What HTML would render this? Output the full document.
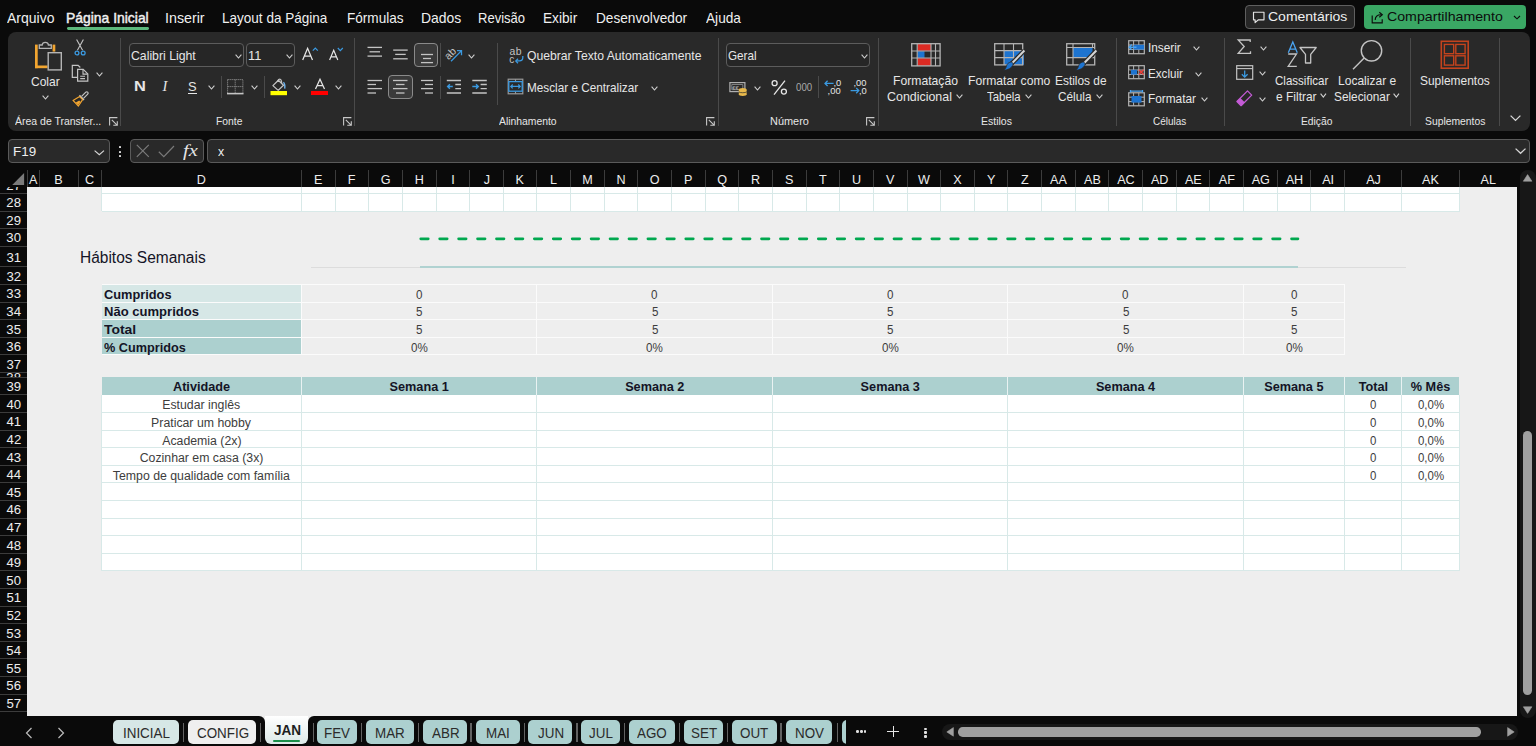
<!DOCTYPE html>
<html><head><meta charset="utf-8"><style>
html,body{margin:0;padding:0;}
body{width:1536px;height:746px;overflow:hidden;background:#0a0a0a;position:relative;font-family:"Liberation Sans", sans-serif;}
.t{position:absolute;white-space:nowrap;line-height:1;}
.b{position:absolute;}
svg.b{overflow:visible;}
</style></head><body>
<div class="t" style="left:7.10px;top:12.00px;font-size:13.9px;color:#f0f0f0;font-weight:normal;transform:scaleX(1.0072);transform-origin:0 0;">Arquivo</div>
<div class="t" style="left:66.49px;top:12.00px;font-size:13.9px;color:#f0f0f0;font-weight:normal;transform:scaleX(1.0010);transform-origin:0 0;-webkit-text-stroke:0.45px #f0f0f0;">Página Inicial</div>
<div class="t" style="left:164.92px;top:12.00px;font-size:13.9px;color:#f0f0f0;font-weight:normal;transform:scaleX(1.0266);transform-origin:0 0;">Inserir</div>
<div class="t" style="left:222.22px;top:12.00px;font-size:13.9px;color:#f0f0f0;font-weight:normal;transform:scaleX(0.9739);transform-origin:0 0;">Layout da Página</div>
<div class="t" style="left:346.61px;top:12.00px;font-size:13.9px;color:#f0f0f0;font-weight:normal;transform:scaleX(0.9776);transform-origin:0 0;">Fórmulas</div>
<div class="t" style="left:420.68px;top:12.00px;font-size:13.9px;color:#f0f0f0;font-weight:normal;transform:scaleX(1.0033);transform-origin:0 0;">Dados</div>
<div class="t" style="left:478.46px;top:12.00px;font-size:13.9px;color:#f0f0f0;font-weight:normal;transform:scaleX(0.9379);transform-origin:0 0;">Revisão</div>
<div class="t" style="left:543.31px;top:12.00px;font-size:13.9px;color:#f0f0f0;font-weight:normal;transform:scaleX(0.9842);transform-origin:0 0;">Exibir</div>
<div class="t" style="left:596.11px;top:12.00px;font-size:13.9px;color:#f0f0f0;font-weight:normal;transform:scaleX(0.9826);transform-origin:0 0;">Desenvolvedor</div>
<div class="t" style="left:706.00px;top:12.00px;font-size:13.9px;color:#f0f0f0;font-weight:normal;transform:scaleX(0.9827);transform-origin:0 0;">Ajuda</div>
<div class="b" style="left:67.30px;top:27.30px;width:81.50px;height:2.80px;background:#5cb87c;border-radius:1.4px"></div>
<div class="b" style="left:1244.80px;top:4.90px;width:110.70px;height:24.00px;background:#262626;border:1px solid #5f5f5f;box-sizing:border-box;border-radius:4px"></div>
<svg class="b" style="left:1252px;top:11px;" width="14" height="13" viewBox="0 0 14 13"><path d="M1.5 1.2h10.5v7.6h-5.6l-3.3 2.8v-2.8h-1.6z" fill="none" stroke="#e4e4e4" stroke-width="1.15" stroke-linejoin="round"/></svg>
<div class="t" style="left:1267.50px;top:10.00px;font-size:13.6px;color:#f0f0f0;font-weight:normal;transform:scaleX(1.0295);transform-origin:0 0;">Comentários</div>
<div class="b" style="left:1364.00px;top:4.90px;width:161.50px;height:24.00px;background:#3aa764;border-radius:4px"></div>
<svg class="b" style="left:1371px;top:10px;" width="13" height="14" viewBox="0 0 13 14"><path d="M1.2 5.5v7.3h10v-3.6" fill="none" stroke="#0c0c0c" stroke-width="1.15"/><path d="M4.2 10c0-3.2 2.2-5.3 6-5.3" fill="none" stroke="#0c0c0c" stroke-width="1.15"/><path d="M8.3 2.2l3 2.5-3 2.6" fill="none" stroke="#0c0c0c" stroke-width="1.15"/></svg>
<div class="t" style="left:1387.29px;top:10.00px;font-size:13.6px;color:#0c0c0c;font-weight:normal;transform:scaleX(1.0429);transform-origin:0 0;">Compartilhamento</div>
<svg class="b" style="left:1513px;top:15px;" width="8" height="5" viewBox="0 0 8 5"><path d="M1 1l3 2.8 3-2.8" fill="none" stroke="#0c0c0c" stroke-width="1.1"/></svg>
<div class="b" style="left:8.00px;top:32.00px;width:1521.50px;height:99.20px;background:#292929;border-radius:8px"></div>
<div class="b" style="left:119.70px;top:37.50px;width:1.00px;height:88.00px;background:#4a4a4a"></div>
<div class="b" style="left:353.90px;top:37.50px;width:1.00px;height:88.00px;background:#4a4a4a"></div>
<div class="b" style="left:717.60px;top:37.50px;width:1.00px;height:88.00px;background:#4a4a4a"></div>
<div class="b" style="left:877.80px;top:37.50px;width:1.00px;height:88.00px;background:#4a4a4a"></div>
<div class="b" style="left:1115.50px;top:37.50px;width:1.00px;height:88.00px;background:#4a4a4a"></div>
<div class="b" style="left:1223.50px;top:37.50px;width:1.00px;height:88.00px;background:#4a4a4a"></div>
<div class="b" style="left:1410.10px;top:37.50px;width:1.00px;height:88.00px;background:#4a4a4a"></div>
<div class="b" style="left:1499.00px;top:37.50px;width:1.00px;height:88.00px;background:#4a4a4a"></div>
<div class="b" style="left:497.00px;top:42.50px;width:1.00px;height:62.00px;background:#4a4a4a"></div>
<div class="b" style="left:221.10px;top:75.80px;width:1.00px;height:22.60px;background:#4a4a4a"></div>
<div class="b" style="left:264.00px;top:75.80px;width:1.00px;height:22.60px;background:#4a4a4a"></div>
<div class="b" style="left:439.60px;top:43.40px;width:1.00px;height:23.60px;background:#4a4a4a"></div>
<div class="b" style="left:439.60px;top:75.60px;width:1.00px;height:23.00px;background:#4a4a4a"></div>
<div class="b" style="left:818.10px;top:75.60px;width:1.00px;height:22.80px;background:#4a4a4a"></div>
<div class="t" style="left:15.00px;top:116.00px;font-size:11.2px;color:#e6e6e6;font-weight:normal;transform:scaleX(0.9373);transform-origin:0 0;">Área de Transfer...</div>
<div class="t" style="left:215.87px;top:116.00px;font-size:11.2px;color:#e6e6e6;font-weight:normal;transform:scaleX(0.9223);transform-origin:0 0;">Fonte</div>
<div class="t" style="left:498.70px;top:116.00px;font-size:11.2px;color:#e6e6e6;font-weight:normal;transform:scaleX(0.9268);transform-origin:0 0;">Alinhamento</div>
<div class="t" style="left:769.72px;top:116.00px;font-size:11.2px;color:#e6e6e6;font-weight:normal;transform:scaleX(0.9773);transform-origin:0 0;">Número</div>
<div class="t" style="left:980.76px;top:116.00px;font-size:11.2px;color:#e6e6e6;font-weight:normal;transform:scaleX(0.9402);transform-origin:0 0;">Estilos</div>
<div class="t" style="left:1153.10px;top:116.00px;font-size:11.2px;color:#e6e6e6;font-weight:normal;transform:scaleX(0.8901);transform-origin:0 0;">Células</div>
<div class="t" style="left:1300.88px;top:116.00px;font-size:11.2px;color:#e6e6e6;font-weight:normal;transform:scaleX(0.9187);transform-origin:0 0;">Edição</div>
<div class="t" style="left:1424.53px;top:116.00px;font-size:11.2px;color:#e6e6e6;font-weight:normal;transform:scaleX(0.9247);transform-origin:0 0;">Suplementos</div>
<svg class="b" style="left:108.8px;top:117.2px;" width="9" height="9" viewBox="0 0 9 9"><path d="M0.6 8.4V0.6H8.4" fill="none" stroke="#c8c8c8" stroke-width="1.1"/><path d="M2.8 2.8l5 5M8.3 4.3v4h-4" fill="none" stroke="#c8c8c8" stroke-width="1.1"/></svg>
<svg class="b" style="left:342.6px;top:117.2px;" width="9" height="9" viewBox="0 0 9 9"><path d="M0.6 8.4V0.6H8.4" fill="none" stroke="#c8c8c8" stroke-width="1.1"/><path d="M2.8 2.8l5 5M8.3 4.3v4h-4" fill="none" stroke="#c8c8c8" stroke-width="1.1"/></svg>
<svg class="b" style="left:706px;top:117.2px;" width="9" height="9" viewBox="0 0 9 9"><path d="M0.6 8.4V0.6H8.4" fill="none" stroke="#c8c8c8" stroke-width="1.1"/><path d="M2.8 2.8l5 5M8.3 4.3v4h-4" fill="none" stroke="#c8c8c8" stroke-width="1.1"/></svg>
<svg class="b" style="left:865.8px;top:117.2px;" width="9" height="9" viewBox="0 0 9 9"><path d="M0.6 8.4V0.6H8.4" fill="none" stroke="#c8c8c8" stroke-width="1.1"/><path d="M2.8 2.8l5 5M8.3 4.3v4h-4" fill="none" stroke="#c8c8c8" stroke-width="1.1"/></svg>
<svg class="b" style="left:34px;top:40px;" width="29" height="31" viewBox="0 0 29 31"><rect x="1" y="4.6" width="2.7" height="23.6" fill="#f2a530"/><rect x="1" y="25.5" width="12.6" height="2.7" fill="#f2a530"/><rect x="18.6" y="4.6" width="2.7" height="7" fill="#f2a530"/><path d="M5.3 8.4V5h2.9c0.3-3.4 5.9-3.4 6.2 0h2.9v3.4z" fill="none" stroke="#b4b4b4" stroke-width="1.3"/><rect x="14.2" y="12.7" width="13.1" height="17.2" fill="#292929" stroke="#b4b4b4" stroke-width="1.4"/></svg>
<div class="t" style="left:30.80px;top:76.00px;font-size:12.6px;color:#e6e6e6;font-weight:normal;transform:scaleX(0.9544);transform-origin:0 0;">Colar</div>
<svg class="b" style="left:41.8px;top:95.4px;" width="7" height="5" viewBox="0 0 7 5"><path d="M0.6 0.6L3.5 4L6.4 0.6" fill="none" stroke="#d0d0d0" stroke-width="1.1"/></svg>
<svg class="b" style="left:74px;top:39px;" width="12" height="17" viewBox="0 0 12 17"><path d="M2.6 0.5L8.6 11.2M9.4 0.5L3.4 11.2" stroke="#c4c4c4" stroke-width="1.1" fill="none"/><circle cx="3" cy="14" r="1.9" stroke="#3b9ae1" stroke-width="1.3" fill="none"/><circle cx="9.2" cy="14" r="1.9" stroke="#3b9ae1" stroke-width="1.3" fill="none"/></svg>
<svg class="b" style="left:71px;top:64px;" width="18" height="18" viewBox="0 0 18 18"><path d="M6.8 13.4H1.3V1.3h5.8l2.2 2.2" fill="none" stroke="#c4c4c4" stroke-width="1.2"/><path d="M6.6 5.3h5.6l4.6 4.6v7.3H6.6z" fill="none" stroke="#c4c4c4" stroke-width="1.2"/><path d="M12 5.5v4.6h4.6M9.2 12.3h4.8M9.2 14.6h4.8" fill="none" stroke="#c4c4c4" stroke-width="1.1"/></svg>
<svg class="b" style="left:96px;top:71.8px;" width="7" height="5" viewBox="0 0 7 5"><path d="M0.6 0.6L3.5 4L6.4 0.6" fill="none" stroke="#d0d0d0" stroke-width="1.1"/></svg>
<svg class="b" style="left:72px;top:90px;" width="17" height="17" viewBox="0 0 17 17"><path d="M9.6 6.4l4.2-4.2a1.3 1.3 0 0 1 1.9 1.9l-4.2 4.2" fill="none" stroke="#c4c4c4" stroke-width="1.2"/><path d="M7.4 5.4l4.6 4.6" stroke="#c4c4c4" stroke-width="1.5"/><path d="M7.6 6.6L1 10.4l5.4 5.6 4.2-6.4z" fill="none" stroke="#f2a530" stroke-width="1.2" stroke-linejoin="round"/><path d="M3.8 12.6l3.4-2.2 1.3 1.4-2.3 3.2z" fill="#f2a530"/></svg>
<div class="b" style="left:129.40px;top:43.30px;width:114.80px;height:24.00px;background:#262626;border:1px solid #5c5c5c;box-sizing:border-box;border-radius:4px"></div>
<div class="t" style="left:131.09px;top:50.00px;font-size:12.6px;color:#e6e6e6;font-weight:normal;transform:scaleX(0.9736);transform-origin:0 0;">Calibri Light</div>
<svg class="b" style="left:234.8px;top:53.8px;" width="7" height="5" viewBox="0 0 7 5"><path d="M0.6 0.6L3.5 4L6.4 0.6" fill="none" stroke="#d0d0d0" stroke-width="1.1"/></svg>
<div class="b" style="left:246.20px;top:43.30px;width:49.10px;height:24.00px;background:#262626;border:1px solid #5c5c5c;box-sizing:border-box;border-radius:4px"></div>
<div class="t" style="left:247.94px;top:50.00px;font-size:12.6px;color:#e6e6e6;font-weight:normal;transform:scaleX(1.0148);transform-origin:0 0;">11</div>
<svg class="b" style="left:286.4px;top:53.8px;" width="7" height="5" viewBox="0 0 7 5"><path d="M0.6 0.6L3.5 4L6.4 0.6" fill="none" stroke="#d0d0d0" stroke-width="1.1"/></svg>
<svg class="b" style="left:300px;top:46px;" width="16" height="16" viewBox="0 0 16 16"><path d="M2.7 14.1L7.6 2.3L12.5 14.1M4.3 10.2H10.9" fill="none" stroke="#e6e6e6" stroke-width="1.25"/></svg>
<svg class="b" style="left:312px;top:47px;" width="7" height="5" viewBox="0 0 7 5"><path d="M0.8 3.6L3.3 1L5.8 3.6" fill="none" stroke="#3b9ae1" stroke-width="1.2"/></svg>
<svg class="b" style="left:327px;top:49px;" width="13" height="13" viewBox="0 0 13 13"><path d="M2.6 11.1L6.7 1.3L10.8 11.1M3.9 7.8H9.5" fill="none" stroke="#e6e6e6" stroke-width="1.2"/></svg>
<svg class="b" style="left:337px;top:47px;" width="7" height="5" viewBox="0 0 7 5"><path d="M0.8 1L3.3 3.6L5.8 1" fill="none" stroke="#3b9ae1" stroke-width="1.2"/></svg>
<div class="t" style="left:134.23px;top:79.00px;font-size:14.6px;color:#e6e6e6;font-weight:bold;transform:scaleX(1.1261);transform-origin:0 0;">N</div>
<div class="t" style="left:162.6px;top:79.13px;font-size:14.5px;color:#e6e6e6;font-family:'Liberation Serif',serif;font-style:italic">I</div>
<div class="t" style="left:188.02px;top:81.00px;font-size:12.5px;color:#e6e6e6;font-weight:normal;transform:scaleX(1.0296);transform-origin:0 0;">S</div>
<div class="b" style="left:188.20px;top:93.00px;width:8.40px;height:1.30px;background:#e6e6e6"></div>
<svg class="b" style="left:207.5px;top:85.0px;" width="7" height="5" viewBox="0 0 7 5"><path d="M0.6 0.6L3.5 4L6.4 0.6" fill="none" stroke="#d0d0d0" stroke-width="1.1"/></svg>
<svg class="b" style="left:227px;top:79px;" width="17" height="16" viewBox="0 0 17 16"><path d="M0.6 0.6h15.3v14M0.6 0.6v14M8.2 0.6v14M0.6 7.6h15.3" fill="none" stroke="#8a8a8a" stroke-width="1" stroke-dasharray="1.2 0.8"/><path d="M0 14.6h16.5" stroke="#c4c4c4" stroke-width="1.6"/></svg>
<svg class="b" style="left:251px;top:85.0px;" width="7" height="5" viewBox="0 0 7 5"><path d="M0.6 0.6L3.5 4L6.4 0.6" fill="none" stroke="#d0d0d0" stroke-width="1.1"/></svg>
<svg class="b" style="left:271px;top:78px;" width="17" height="18" viewBox="0 0 17 18"><path d="M1.9 7.6L7.4 2.2L12.5 7.3L7.2 12.4z" fill="none" stroke="#c4c4c4" stroke-width="1.25" stroke-linejoin="round"/><path d="M6.4 3.2C8.2 0.2 10.6 0.4 10.7 5.2" fill="none" stroke="#c4c4c4" stroke-width="1.2"/><path d="M12.4 4.2c1.5 1.3 1.7 3.4 1.3 6.4" fill="none" stroke="#6fb3ee" stroke-width="1.4"/><rect x="-0.5" y="13" width="16.5" height="4.2" fill="#ffff00"/></svg>
<svg class="b" style="left:294px;top:85.0px;" width="7" height="5" viewBox="0 0 7 5"><path d="M0.6 0.6L3.5 4L6.4 0.6" fill="none" stroke="#d0d0d0" stroke-width="1.1"/></svg>
<svg class="b" style="left:313px;top:78px;" width="14" height="13" viewBox="0 0 14 13"><path d="M2.5 11L7 1.3L11.5 11M4 7.6H10" fill="none" stroke="#e6e6e6" stroke-width="1.25"/></svg>
<div class="b" style="left:311.40px;top:91.00px;width:16.40px;height:4.30px;background:#ff0000"></div>
<svg class="b" style="left:335px;top:85.0px;" width="7" height="5" viewBox="0 0 7 5"><path d="M0.6 0.6L3.5 4L6.4 0.6" fill="none" stroke="#d0d0d0" stroke-width="1.1"/></svg>
<svg class="b" style="left:367px;top:46px;" width="17" height="17" viewBox="0 0 17 17"><path d="M0.5 1.4H15" stroke="#c4c4c4" stroke-width="1.3"/><path d="M2.5 5.8H13" stroke="#c4c4c4" stroke-width="1.3"/><path d="M0.5 10.1H15" stroke="#c4c4c4" stroke-width="1.3"/></svg>
<svg class="b" style="left:393px;top:49px;" width="17" height="17" viewBox="0 0 17 17"><path d="M0.2 1.1H14.7" stroke="#c4c4c4" stroke-width="1.3"/><path d="M2.2 5.4H12.7" stroke="#c4c4c4" stroke-width="1.3"/><path d="M0.2 9.8H14.7" stroke="#c4c4c4" stroke-width="1.3"/></svg>
<div class="b" style="left:414.20px;top:43.40px;width:23.60px;height:23.70px;background:#3a3a3a;border:1px solid #8a8a8a;box-sizing:border-box;border-radius:4px"></div>
<svg class="b" style="left:421px;top:53px;" width="17" height="17" viewBox="0 0 17 17"><path d="M0 1.5H12" stroke="#c4c4c4" stroke-width="1.3"/><path d="M2 5.5H10" stroke="#c4c4c4" stroke-width="1.3"/><path d="M0 9.6H12" stroke="#c4c4c4" stroke-width="1.3"/></svg>
<svg class="b" style="left:446px;top:46px;" width="17" height="17" viewBox="0 0 17 17"><text x="0" y="0" transform="translate(2.6 14.2) rotate(-45)" font-family="Liberation Sans" font-size="10.5" fill="#c4c4c4">ab</text><path d="M5 15.2L15.3 4.9M11 4.7h4.5v4.5" fill="none" stroke="#3b9ae1" stroke-width="1.3"/></svg>
<svg class="b" style="left:468.3px;top:54.0px;" width="7" height="5" viewBox="0 0 7 5"><path d="M0.6 0.6L3.5 4L6.4 0.6" fill="none" stroke="#d0d0d0" stroke-width="1.1"/></svg>
<svg class="b" style="left:367px;top:79px;" width="17" height="17" viewBox="0 0 17 17"><path d="M0.5 1.5H15" stroke="#c4c4c4" stroke-width="1.3"/><path d="M0.5 5.5H9" stroke="#c4c4c4" stroke-width="1.3"/><path d="M0.5 9.6H15" stroke="#c4c4c4" stroke-width="1.3"/><path d="M0.5 14H9" stroke="#c4c4c4" stroke-width="1.3"/></svg>
<div class="b" style="left:388.20px;top:75.20px;width:24.40px;height:24.10px;background:#3a3a3a;border:1px solid #8a8a8a;box-sizing:border-box;border-radius:4px"></div>
<svg class="b" style="left:393px;top:79px;" width="17" height="17" viewBox="0 0 17 17"><path d="M0 1.5H14.5" stroke="#c4c4c4" stroke-width="1.3"/><path d="M3 5.5H11.5" stroke="#c4c4c4" stroke-width="1.3"/><path d="M0 9.6H14.5" stroke="#c4c4c4" stroke-width="1.3"/><path d="M3 14H11.5" stroke="#c4c4c4" stroke-width="1.3"/></svg>
<svg class="b" style="left:421px;top:79px;" width="17" height="17" viewBox="0 0 17 17"><path d="M0 1.5H12" stroke="#c4c4c4" stroke-width="1.3"/><path d="M4 5.5H12" stroke="#c4c4c4" stroke-width="1.3"/><path d="M0 9.6H12" stroke="#c4c4c4" stroke-width="1.3"/><path d="M4 14H12" stroke="#c4c4c4" stroke-width="1.3"/></svg>
<svg class="b" style="left:446px;top:79px;" width="17" height="17" viewBox="0 0 17 17"><path d="M0.8 1.5H15M9.3 5.5H15M9.3 9.6H15M0.8 14H15" stroke="#c4c4c4" stroke-width="1.3"/><path d="M6.8 7.5H1.6M3.9 5.2L1.6 7.5l2.3 2.3" fill="none" stroke="#3b9ae1" stroke-width="1.4"/></svg>
<svg class="b" style="left:472px;top:79px;" width="17" height="17" viewBox="0 0 17 17"><path d="M0.3 1.5H14.8M8.6 5.5H14.8M8.6 9.6H14.8M0.3 14H14.8" stroke="#c4c4c4" stroke-width="1.3"/><path d="M0.3 7.5H6.3M4 5.2L6.3 7.5 4 9.8" fill="none" stroke="#3b9ae1" stroke-width="1.4"/></svg>
<svg class="b" style="left:509px;top:47px;" width="16" height="17" viewBox="0 0 16 17"><text x="0.6" y="7.6" font-family="Liberation Sans" font-size="10.4" fill="#c4c4c4" letter-spacing="0.3">ab</text><text x="0.2" y="15.8" font-family="Liberation Sans" font-size="10" fill="#c4c4c4">c</text><path d="M13.8 9v1.6c0 2-1.2 3.3-3.3 3.3H7" fill="none" stroke="#3b9ae1" stroke-width="1.3"/><path d="M9 11.8L6.8 14 9 16.2" fill="none" stroke="#3b9ae1" stroke-width="1.3"/></svg>
<div class="t" style="left:527.45px;top:50.00px;font-size:12.6px;color:#e6e6e6;font-weight:normal;transform:scaleX(0.9671);transform-origin:0 0;">Quebrar Texto Automaticamente</div>
<svg class="b" style="left:507px;top:78px;" width="17" height="17" viewBox="0 0 17 17"><rect x="1.2" y="1.2" width="14.6" height="14.6" fill="none" stroke="#9a9a9a" stroke-width="1.2"/><path d="M8.5 1.2v2.2M8.5 13.6v2.2" stroke="#9a9a9a" stroke-width="1.1"/><rect x="1.8" y="3.6" width="13.4" height="9.6" fill="none" stroke="#3b9ae1" stroke-width="1.3"/><path d="M4 8.4h9M5.7 6.5L3.8 8.4l1.9 1.9M11.3 6.5l1.9 1.9-1.9 1.9" fill="none" stroke="#3b9ae1" stroke-width="1.2"/></svg>
<div class="t" style="left:527.06px;top:82.00px;font-size:12.6px;color:#e6e6e6;font-weight:normal;transform:scaleX(0.9337);transform-origin:0 0;">Mesclar e Centralizar</div>
<svg class="b" style="left:650.7px;top:85.5px;" width="7" height="5" viewBox="0 0 7 5"><path d="M0.6 0.6L3.5 4L6.4 0.6" fill="none" stroke="#d0d0d0" stroke-width="1.1"/></svg>
<div class="b" style="left:726.40px;top:43.40px;width:144.10px;height:23.70px;background:#262626;border:1px solid #5c5c5c;box-sizing:border-box;border-radius:4px"></div>
<div class="t" style="left:728.41px;top:50.00px;font-size:12.6px;color:#e6e6e6;font-weight:normal;transform:scaleX(0.9299);transform-origin:0 0;">Geral</div>
<svg class="b" style="left:861.0px;top:54.0px;" width="7" height="5" viewBox="0 0 7 5"><path d="M0.6 0.6L3.5 4L6.4 0.6" fill="none" stroke="#d0d0d0" stroke-width="1.1"/></svg>
<svg class="b" style="left:729px;top:81px;" width="19" height="15" viewBox="0 0 19 15"><rect x="0.9" y="1.6" width="15" height="9" fill="none" stroke="#b0b0b0" stroke-width="1.2"/><path d="M2.8 3.5h11v5.2h-11z" fill="none" stroke="#8a8a8a" stroke-width="0.9"/><text x="3.2" y="8.6" font-family="Liberation Sans" font-size="6" fill="#b0b0b0">€€</text><ellipse cx="13.7" cy="8.7" rx="3.9" ry="1.6" fill="#e7b84c"/><rect x="9.8" y="8.7" width="7.8" height="5" fill="#e7b84c"/><ellipse cx="13.7" cy="13.5" rx="3.9" ry="1.4" fill="#e7b84c"/><path d="M9.8 10.9c1 1.1 6.8 1.1 7.8 0" fill="none" stroke="#292929" stroke-width="0.7"/></svg>
<svg class="b" style="left:754px;top:85.8px;" width="7" height="5" viewBox="0 0 7 5"><path d="M0.6 0.6L3.5 4L6.4 0.6" fill="none" stroke="#d0d0d0" stroke-width="1.1"/></svg>
<svg class="b" style="left:771px;top:79px;" width="17" height="17" viewBox="0 0 17 17"><circle cx="3.6" cy="4.2" r="2.5" fill="none" stroke="#e6e6e6" stroke-width="1.3"/><circle cx="12.9" cy="12.6" r="2.5" fill="none" stroke="#e6e6e6" stroke-width="1.3"/><path d="M14 1.6L3 15.6" stroke="#e6e6e6" stroke-width="1.3"/></svg>
<div class="t" style="left:796.41px;top:82.00px;font-size:10.5px;color:#a8a8a8;font-weight:normal;transform:scaleX(0.9224);transform-origin:0 0;">000</div>
<svg class="b" style="left:824px;top:79px;" width="18" height="17" viewBox="0 0 18 17"><text x="9.4" y="7.2" font-family="Liberation Sans" font-size="9.4" fill="#e6e6e6">,0</text><text x="3.6" y="15.2" font-family="Liberation Sans" font-size="9.4" fill="#e6e6e6">,00</text><path d="M1 4.4h8.6M3.6 1.8L1 4.4l2.6 2.6" fill="none" stroke="#3b9ae1" stroke-width="1.3"/></svg>
<svg class="b" style="left:850px;top:79px;" width="18" height="17" viewBox="0 0 18 17"><text x="3.4" y="7.2" font-family="Liberation Sans" font-size="9.4" fill="#e6e6e6">,00</text><text x="9.0" y="15.4" font-family="Liberation Sans" font-size="9.4" fill="#e6e6e6">,0</text><path d="M0.6 11.6h8.2M6.2 9l2.6 2.6-2.6 2.6" fill="none" stroke="#3b9ae1" stroke-width="1.3"/></svg>
<svg class="b" style="left:911px;top:43px;" width="30" height="24" viewBox="0 0 30 24"><rect x="6.5" y="0.8" width="13.5" height="7" fill="#dc2a23"/><rect x="6.5" y="15.2" width="13.5" height="7.6" fill="#dc2a23"/><rect x="6.5" y="8.2" width="7" height="6.6" fill="#1e74d0"/><rect x="0.7" y="0.7" width="28.4" height="22.2" fill="none" stroke="#b4b4b4" stroke-width="1.3"/><path d="M6.2 0.7v22.2M20 0.7v22.2M24.5 0.7v22.2M0.7 8h28.4M0.7 15h28.4" stroke="#b4b4b4" stroke-width="1.1"/></svg>
<div class="t" style="left:892.73px;top:75.00px;font-size:12.6px;color:#e6e6e6;font-weight:normal;transform:scaleX(0.9664);transform-origin:0 0;">Formatação</div>
<div class="t" style="left:887.38px;top:91.00px;font-size:12.6px;color:#e6e6e6;font-weight:normal;transform:scaleX(0.9862);transform-origin:0 0;">Condicional</div>
<svg class="b" style="left:955.6px;top:93.8px;" width="7" height="5" viewBox="0 0 7 5"><path d="M0.6 0.6L3.5 4L6.4 0.6" fill="none" stroke="#d0d0d0" stroke-width="1.1"/></svg>
<svg class="b" style="left:994px;top:43px;" width="33" height="29" viewBox="0 0 33 29"><rect x="10" y="7.8" width="20" height="14" fill="#1e74d0"/><rect x="0.7" y="0.7" width="28" height="21.2" fill="none" stroke="#b4b4b4" stroke-width="1.3"/><path d="M10 0.7v21.2M19.5 0.7v21.2M0.7 7.6h28M0.7 14.6h28" stroke="#b4b4b4" stroke-width="1.1"/><path d="M30.4 7.5L17.5 20.8" stroke="#2a2a2a" stroke-width="4.5"/><path d="M30.4 7.5L17.5 20.8" stroke="#d6d6d6" stroke-width="2"/><path d="M15.5 19.5c2-1.5 4.5 0.5 3.2 3-1.2 2.6-4.5 4.5-9.2 4.8 2.4-1.6 2.8-3.4 3.2-4.8 0.4-1.5 1.4-2.4 2.8-3z" fill="#1e74d0" stroke="#2a2a2a" stroke-width="0.8"/></svg>
<div class="t" style="left:967.63px;top:75.00px;font-size:12.6px;color:#e6e6e6;font-weight:normal;transform:scaleX(0.9641);transform-origin:0 0;">Formatar como</div>
<div class="t" style="left:987.07px;top:91.00px;font-size:12.6px;color:#e6e6e6;font-weight:normal;transform:scaleX(0.9063);transform-origin:0 0;">Tabela</div>
<svg class="b" style="left:1024.7px;top:93.8px;" width="7" height="5" viewBox="0 0 7 5"><path d="M0.6 0.6L3.5 4L6.4 0.6" fill="none" stroke="#d0d0d0" stroke-width="1.1"/></svg>
<svg class="b" style="left:1066px;top:43px;" width="33" height="29" viewBox="0 0 33 29"><rect x="7" y="4.5" width="19.5" height="10" fill="#1e74d0"/><rect x="0.7" y="0.7" width="28" height="21.2" fill="none" stroke="#b4b4b4" stroke-width="1.3"/><path d="M7 0.7v21.2M0.7 4.5h28M0.7 14.6h28M26.5 0.7v4" stroke="#b4b4b4" stroke-width="1.1"/><path d="M30.4 7.5L17.5 20.8" stroke="#2a2a2a" stroke-width="4.5"/><path d="M30.4 7.5L17.5 20.8" stroke="#d6d6d6" stroke-width="2"/><path d="M15.5 19.5c2-1.5 4.5 0.5 3.2 3-1.2 2.6-4.5 4.5-9.2 4.8 2.4-1.6 2.8-3.4 3.2-4.8 0.4-1.5 1.4-2.4 2.8-3z" fill="#1e74d0" stroke="#2a2a2a" stroke-width="0.8"/></svg>
<div class="t" style="left:1054.75px;top:75.00px;font-size:12.6px;color:#e6e6e6;font-weight:normal;transform:scaleX(0.9445);transform-origin:0 0;">Estilos de</div>
<div class="t" style="left:1058.01px;top:91.00px;font-size:12.6px;color:#e6e6e6;font-weight:normal;transform:scaleX(0.9376);transform-origin:0 0;">Célula</div>
<svg class="b" style="left:1095.5px;top:93.8px;" width="7" height="5" viewBox="0 0 7 5"><path d="M0.6 0.6L3.5 4L6.4 0.6" fill="none" stroke="#d0d0d0" stroke-width="1.1"/></svg>
<svg class="b" style="left:1128px;top:40px;" width="17" height="15" viewBox="0 0 17 15"><rect x="0.7" y="0.7" width="15.6" height="13" fill="none" stroke="#b4b4b4" stroke-width="1.2"/><path d="M5.6 0.7v13M10.8 0.7v13M0.7 5h15.6M0.7 9.4h15.6" stroke="#b4b4b4" stroke-width="1"/><rect x="5.6" y="4.8" width="10.5" height="4.8" fill="#1e74d0"/><path d="M8.5 7.2H1.2M3.8 4.6L1.2 7.2l2.6 2.6" fill="none" stroke="#4aa3f0" stroke-width="1.4"/></svg>
<div class="t" style="left:1147.84px;top:42.00px;font-size:12.6px;color:#e6e6e6;font-weight:normal;transform:scaleX(0.9363);transform-origin:0 0;">Inserir</div>
<svg class="b" style="left:1192.8px;top:45.8px;" width="7" height="5" viewBox="0 0 7 5"><path d="M0.6 0.6L3.5 4L6.4 0.6" fill="none" stroke="#d0d0d0" stroke-width="1.1"/></svg>
<svg class="b" style="left:1128px;top:65px;" width="17" height="15" viewBox="0 0 17 15"><rect x="0.7" y="0.7" width="15.6" height="13" fill="none" stroke="#b4b4b4" stroke-width="1.2"/><path d="M5.6 0.7v13M10.8 0.7v13M0.7 5h15.6M0.7 9.4h15.6" stroke="#b4b4b4" stroke-width="1"/><rect x="3" y="4.8" width="6" height="4.8" fill="#1e74d0"/><path d="M11 4.8l4.6 4.8M15.6 4.8L11 9.6" stroke="#e8413c" stroke-width="1.4"/><rect x="1" y="5.5" width="1.5" height="3.4" fill="#292929"/></svg>
<div class="t" style="left:1147.97px;top:68.00px;font-size:12.6px;color:#e6e6e6;font-weight:normal;transform:scaleX(0.9262);transform-origin:0 0;">Excluir</div>
<svg class="b" style="left:1195.0px;top:71.5px;" width="7" height="5" viewBox="0 0 7 5"><path d="M0.6 0.6L3.5 4L6.4 0.6" fill="none" stroke="#d0d0d0" stroke-width="1.1"/></svg>
<svg class="b" style="left:1128px;top:90px;" width="17" height="17" viewBox="0 0 17 17"><rect x="0.7" y="2.8" width="15.6" height="13" fill="none" stroke="#b4b4b4" stroke-width="1.2"/><path d="M5.6 2.8v13M10.8 2.8v13M0.7 7.2h15.6M0.7 11.6h15.6" stroke="#b4b4b4" stroke-width="1"/><rect x="3.5" y="6" width="10" height="6.6" fill="#1e74d0"/><path d="M2.5 1.2h12M2.5 0v2.5M14.5 0v2.5" stroke="#4aa3f0" stroke-width="1.3"/></svg>
<div class="t" style="left:1147.95px;top:93.00px;font-size:12.6px;color:#e6e6e6;font-weight:normal;transform:scaleX(0.9400);transform-origin:0 0;">Formatar</div>
<svg class="b" style="left:1200.5px;top:96.8px;" width="7" height="5" viewBox="0 0 7 5"><path d="M0.6 0.6L3.5 4L6.4 0.6" fill="none" stroke="#d0d0d0" stroke-width="1.1"/></svg>
<svg class="b" style="left:1237px;top:39px;" width="15" height="16" viewBox="0 0 15 16"><path d="M13.2 3V1H1.2l6 6.5-6 6.8h12.3v-2" fill="none" stroke="#c4c4c4" stroke-width="1.3" stroke-linejoin="miter"/></svg>
<svg class="b" style="left:1260px;top:45.5px;" width="7" height="5" viewBox="0 0 7 5"><path d="M0.6 0.6L3.5 4L6.4 0.6" fill="none" stroke="#d0d0d0" stroke-width="1.1"/></svg>
<svg class="b" style="left:1236px;top:65px;" width="18" height="16" viewBox="0 0 18 16"><rect x="0.7" y="0.7" width="16" height="13.6" fill="none" stroke="#c4c4c4" stroke-width="1.2"/><path d="M0.7 3.6h16" stroke="#c4c4c4" stroke-width="1.1"/><path d="M8.7 5.5v6.5M5.8 9.3l2.9 2.9 2.9-2.9" fill="none" stroke="#3b9ae1" stroke-width="1.3"/></svg>
<svg class="b" style="left:1258.6px;top:71.0px;" width="7" height="5" viewBox="0 0 7 5"><path d="M0.6 0.6L3.5 4L6.4 0.6" fill="none" stroke="#d0d0d0" stroke-width="1.1"/></svg>
<svg class="b" style="left:1236px;top:90px;" width="17" height="17" viewBox="0 0 17 17"><path d="M15.7 5.1L11.5 0.9 0.9 11.5 5.1 15.7z" fill="none" stroke="#c45bd6" stroke-width="1.25" stroke-linejoin="round"/><path d="M0.9 11.5L4.4 8 8.6 12.2 5.1 15.7z" fill="#c45bd6"/></svg>
<svg class="b" style="left:1258.6px;top:97.0px;" width="7" height="5" viewBox="0 0 7 5"><path d="M0.6 0.6L3.5 4L6.4 0.6" fill="none" stroke="#d0d0d0" stroke-width="1.1"/></svg>
<svg class="b" style="left:1286px;top:41px;" width="13" height="13" viewBox="0 0 13 13"><path d="M2.3 11.7L6.8 1L11.3 11.7M3.8 8.1H9.8" fill="none" stroke="#4aa3f0" stroke-width="1.3"/></svg>
<svg class="b" style="left:1287px;top:53px;" width="11" height="15" viewBox="0 0 11 15"><path d="M1.2 1h8.3L1.2 13.4h8.6" fill="none" stroke="#c4c4c4" stroke-width="1.3"/></svg>
<svg class="b" style="left:1299px;top:46px;" width="19" height="19" viewBox="0 0 19 19"><path d="M1 1.5h16.2l-5.5 6.8v8.7h-5.2V8.3z" fill="none" stroke="#c4c4c4" stroke-width="1.3" stroke-linejoin="round"/></svg>
<div class="t" style="left:1275.22px;top:75.00px;font-size:12.6px;color:#e6e6e6;font-weight:normal;transform:scaleX(0.9168);transform-origin:0 0;">Classificar</div>
<div class="t" style="left:1276.22px;top:91.00px;font-size:12.6px;color:#e6e6e6;font-weight:normal;transform:scaleX(0.9510);transform-origin:0 0;">e Filtrar</div>
<svg class="b" style="left:1320.4px;top:93.4px;" width="6.6" height="5" viewBox="0 0 6.6 5"><path d="M0.6 0.6L3.3 4L6.0 0.6" fill="none" stroke="#d0d0d0" stroke-width="1.1"/></svg>
<svg class="b" style="left:1352px;top:39px;" width="32" height="32" viewBox="0 0 32 32"><circle cx="19.5" cy="11.8" r="10.2" fill="none" stroke="#c4c4c4" stroke-width="1.4"/><path d="M12.2 19L1 30.3" stroke="#c4c4c4" stroke-width="1.4"/></svg>
<div class="t" style="left:1338.04px;top:75.00px;font-size:12.6px;color:#e6e6e6;font-weight:normal;transform:scaleX(0.9554);transform-origin:0 0;">Localizar e</div>
<div class="t" style="left:1334.07px;top:91.00px;font-size:12.6px;color:#e6e6e6;font-weight:normal;transform:scaleX(0.9384);transform-origin:0 0;">Selecionar</div>
<svg class="b" style="left:1393.4px;top:93.4px;" width="6.6" height="5" viewBox="0 0 6.6 5"><path d="M0.6 0.6L3.3 4L6.0 0.6" fill="none" stroke="#d0d0d0" stroke-width="1.1"/></svg>
<svg class="b" style="left:1440px;top:40px;" width="30" height="30" viewBox="0 0 30 30"><rect x="1.3" y="1.3" width="26.9" height="26.9" fill="none" stroke="#c4431d" stroke-width="1.6"/><rect x="4.4" y="4.4" width="9.3" height="9.3" fill="none" stroke="#c4431d" stroke-width="1.4"/><rect x="15.8" y="4.4" width="9.3" height="9.3" fill="none" stroke="#c4431d" stroke-width="1.4"/><rect x="4.4" y="15.8" width="9.3" height="9.3" fill="none" stroke="#c4431d" stroke-width="1.4"/><rect x="15.8" y="15.8" width="9.3" height="9.3" fill="none" stroke="#c4431d" stroke-width="1.4"/></svg>
<div class="t" style="left:1420.26px;top:75.00px;font-size:12.6px;color:#e6e6e6;font-weight:normal;transform:scaleX(0.9488);transform-origin:0 0;">Suplementos</div>
<svg class="b" style="left:1509.8px;top:115.0px;" width="11" height="6.4" viewBox="0 0 11 6.4"><path d="M0.6 0.6L5.5 5.4L10.4 0.6" fill="none" stroke="#d8d8d8" stroke-width="1.3"/></svg>
<div class="b" style="left:8.30px;top:139.40px;width:101.70px;height:23.80px;background:#292929;border:1px solid #5a5a5a;box-sizing:border-box;border-radius:4px"></div>
<div class="t" style="left:13.03px;top:145.00px;font-size:13.4px;color:#f0f0f0;font-weight:normal;transform:scaleX(1.0013);transform-origin:0 0;">F19</div>
<svg class="b" style="left:93.9px;top:150.3px;" width="10.6" height="5.7" viewBox="0 0 10.6 5.7"><path d="M0.6 0.6L5.3 4.7L10.0 0.6" fill="none" stroke="#d6d6d6" stroke-width="1.2"/></svg>
<div class="b" style="left:118.50px;top:146.40px;width:2.00px;height:2.00px;background:#d8d8d8;border-radius:0.6px"></div>
<div class="b" style="left:118.50px;top:150.70px;width:2.00px;height:2.00px;background:#d8d8d8;border-radius:0.6px"></div>
<div class="b" style="left:118.50px;top:155.00px;width:2.00px;height:2.00px;background:#d8d8d8;border-radius:0.6px"></div>
<div class="b" style="left:130.00px;top:139.30px;width:73.50px;height:24.00px;background:#292929;border:1px solid #5a5a5a;box-sizing:border-box;border-radius:4px"></div>
<svg class="b" style="left:136px;top:144px;" width="14" height="14" viewBox="0 0 14 14"><path d="M0.8 0.8L12.8 12.8M12.8 0.8L0.8 12.8" stroke="#7a7a7a" stroke-width="1.2"/></svg>
<svg class="b" style="left:158px;top:145px;" width="17" height="13" viewBox="0 0 17 13"><path d="M0.8 6.8L5.8 11.6L16 1" fill="none" stroke="#7a7a7a" stroke-width="1.2"/></svg>
<div class="t" style="left:183.10px;top:142.00px;font-size:17.5px;color:#e6e6e6;font-family:'Liberation Serif',serif;font-style:italic;transform:scaleX(1.1672);transform-origin:0 0;">fx</div>
<div class="b" style="left:207.40px;top:139.30px;width:1322.30px;height:23.80px;background:#292929;border:1px solid #5a5a5a;box-sizing:border-box;border-radius:4px"></div>
<div class="t" style="left:217.68px;top:146.00px;font-size:12.6px;color:#f0f0f0;font-weight:normal;transform:scaleX(0.9755);transform-origin:0 0;">x</div>
<svg class="b" style="left:1515.2px;top:147.7px;" width="11.1" height="6.3" viewBox="0 0 11.1 6.3"><path d="M0.6 0.6L5.55 5.3L10.5 0.6" fill="none" stroke="#d6d6d6" stroke-width="1.3"/></svg>
<div class="b" style="left:26.80px;top:187.30px;width:1490.20px;height:528.90px;background:#eeeeee"></div>
<svg class="b" style="left:11px;top:172px;" width="15" height="15" viewBox="0 0 15 15"><path d="M13.1 1.1V13H1.2z" fill="#7b7b7b"/></svg>
<div class="b" style="left:26.50px;top:170.00px;width:1.00px;height:17.30px;background:#3c3c3c"></div>
<div class="t" style="left:29.06px;top:174.00px;font-size:12.6px;color:#ededed;font-weight:normal;transform:scaleX(1.0000);transform-origin:0 0;">A</div>
<div class="b" style="left:39.00px;top:170.00px;width:1.00px;height:17.30px;background:#3c3c3c"></div>
<div class="t" style="left:54.37px;top:174.00px;font-size:12.6px;color:#ededed;font-weight:normal;transform:scaleX(1.0000);transform-origin:0 0;">B</div>
<div class="b" style="left:77.50px;top:170.00px;width:1.00px;height:17.30px;background:#3c3c3c"></div>
<div class="t" style="left:85.12px;top:174.00px;font-size:12.6px;color:#ededed;font-weight:normal;transform:scaleX(1.0000);transform-origin:0 0;">C</div>
<div class="b" style="left:101.00px;top:170.00px;width:1.00px;height:17.30px;background:#3c3c3c"></div>
<div class="t" style="left:196.74px;top:174.00px;font-size:12.6px;color:#ededed;font-weight:normal;transform:scaleX(1.0000);transform-origin:0 0;">D</div>
<div class="b" style="left:301.00px;top:170.00px;width:1.00px;height:17.30px;background:#3c3c3c"></div>
<div class="t" style="left:313.88px;top:174.00px;font-size:12.6px;color:#ededed;font-weight:normal;transform:scaleX(1.0000);transform-origin:0 0;">E</div>
<div class="b" style="left:334.64px;top:170.00px;width:1.00px;height:17.30px;background:#3c3c3c"></div>
<div class="t" style="left:347.87px;top:174.00px;font-size:12.6px;color:#ededed;font-weight:normal;transform:scaleX(1.0000);transform-origin:0 0;">F</div>
<div class="b" style="left:368.28px;top:170.00px;width:1.00px;height:17.30px;background:#3c3c3c"></div>
<div class="t" style="left:380.85px;top:174.00px;font-size:12.6px;color:#ededed;font-weight:normal;transform:scaleX(1.0000);transform-origin:0 0;">G</div>
<div class="b" style="left:401.93px;top:170.00px;width:1.00px;height:17.30px;background:#3c3c3c"></div>
<div class="t" style="left:414.71px;top:174.00px;font-size:12.6px;color:#ededed;font-weight:normal;transform:scaleX(1.0000);transform-origin:0 0;">H</div>
<div class="b" style="left:435.57px;top:170.00px;width:1.00px;height:17.30px;background:#3c3c3c"></div>
<div class="t" style="left:451.16px;top:174.00px;font-size:12.6px;color:#ededed;font-weight:normal;transform:scaleX(1.0000);transform-origin:0 0;">I</div>
<div class="b" style="left:469.21px;top:170.00px;width:1.00px;height:17.30px;background:#3c3c3c"></div>
<div class="t" style="left:483.76px;top:174.00px;font-size:12.6px;color:#ededed;font-weight:normal;transform:scaleX(1.0000);transform-origin:0 0;">J</div>
<div class="b" style="left:502.85px;top:170.00px;width:1.00px;height:17.30px;background:#3c3c3c"></div>
<div class="t" style="left:515.54px;top:174.00px;font-size:12.6px;color:#ededed;font-weight:normal;transform:scaleX(1.0000);transform-origin:0 0;">K</div>
<div class="b" style="left:536.49px;top:170.00px;width:1.00px;height:17.30px;background:#3c3c3c"></div>
<div class="t" style="left:550.00px;top:174.00px;font-size:12.6px;color:#ededed;font-weight:normal;transform:scaleX(1.0000);transform-origin:0 0;">L</div>
<div class="b" style="left:570.14px;top:170.00px;width:1.00px;height:17.30px;background:#3c3c3c"></div>
<div class="t" style="left:582.23px;top:174.00px;font-size:12.6px;color:#ededed;font-weight:normal;transform:scaleX(1.0000);transform-origin:0 0;">M</div>
<div class="b" style="left:603.78px;top:170.00px;width:1.00px;height:17.30px;background:#3c3c3c"></div>
<div class="t" style="left:616.56px;top:174.00px;font-size:12.6px;color:#ededed;font-weight:normal;transform:scaleX(1.0000);transform-origin:0 0;">N</div>
<div class="b" style="left:637.42px;top:170.00px;width:1.00px;height:17.30px;background:#3c3c3c"></div>
<div class="t" style="left:649.86px;top:174.00px;font-size:12.6px;color:#ededed;font-weight:normal;transform:scaleX(1.0000);transform-origin:0 0;">O</div>
<div class="b" style="left:671.06px;top:170.00px;width:1.00px;height:17.30px;background:#3c3c3c"></div>
<div class="t" style="left:684.00px;top:174.00px;font-size:12.6px;color:#ededed;font-weight:normal;transform:scaleX(1.0000);transform-origin:0 0;">P</div>
<div class="b" style="left:704.70px;top:170.00px;width:1.00px;height:17.30px;background:#3c3c3c"></div>
<div class="t" style="left:717.14px;top:174.00px;font-size:12.6px;color:#ededed;font-weight:normal;transform:scaleX(1.0000);transform-origin:0 0;">Q</div>
<div class="b" style="left:738.35px;top:170.00px;width:1.00px;height:17.30px;background:#3c3c3c"></div>
<div class="t" style="left:750.91px;top:174.00px;font-size:12.6px;color:#ededed;font-weight:normal;transform:scaleX(1.0000);transform-origin:0 0;">R</div>
<div class="b" style="left:771.99px;top:170.00px;width:1.00px;height:17.30px;background:#3c3c3c"></div>
<div class="t" style="left:785.12px;top:174.00px;font-size:12.6px;color:#ededed;font-weight:normal;transform:scaleX(1.0000);transform-origin:0 0;">S</div>
<div class="b" style="left:805.63px;top:170.00px;width:1.00px;height:17.30px;background:#3c3c3c"></div>
<div class="t" style="left:819.11px;top:174.00px;font-size:12.6px;color:#ededed;font-weight:normal;transform:scaleX(1.0000);transform-origin:0 0;">T</div>
<div class="b" style="left:839.27px;top:170.00px;width:1.00px;height:17.30px;background:#3c3c3c"></div>
<div class="t" style="left:852.06px;top:174.00px;font-size:12.6px;color:#ededed;font-weight:normal;transform:scaleX(1.0000);transform-origin:0 0;">U</div>
<div class="b" style="left:872.91px;top:170.00px;width:1.00px;height:17.30px;background:#3c3c3c"></div>
<div class="t" style="left:886.05px;top:174.00px;font-size:12.6px;color:#ededed;font-weight:normal;transform:scaleX(1.0000);transform-origin:0 0;">V</div>
<div class="b" style="left:906.56px;top:170.00px;width:1.00px;height:17.30px;background:#3c3c3c"></div>
<div class="t" style="left:917.92px;top:174.00px;font-size:12.6px;color:#ededed;font-weight:normal;transform:scaleX(1.0000);transform-origin:0 0;">W</div>
<div class="b" style="left:940.20px;top:170.00px;width:1.00px;height:17.30px;background:#3c3c3c"></div>
<div class="t" style="left:953.30px;top:174.00px;font-size:12.6px;color:#ededed;font-weight:normal;transform:scaleX(1.0000);transform-origin:0 0;">X</div>
<div class="b" style="left:973.84px;top:170.00px;width:1.00px;height:17.30px;background:#3c3c3c"></div>
<div class="t" style="left:986.94px;top:174.00px;font-size:12.6px;color:#ededed;font-weight:normal;transform:scaleX(1.0000);transform-origin:0 0;">Y</div>
<div class="b" style="left:1007.48px;top:170.00px;width:1.00px;height:17.30px;background:#3c3c3c"></div>
<div class="t" style="left:1020.96px;top:174.00px;font-size:12.6px;color:#ededed;font-weight:normal;transform:scaleX(1.0000);transform-origin:0 0;">Z</div>
<div class="b" style="left:1041.12px;top:170.00px;width:1.00px;height:17.30px;background:#3c3c3c"></div>
<div class="t" style="left:1050.07px;top:174.00px;font-size:12.6px;color:#ededed;font-weight:normal;transform:scaleX(1.0000);transform-origin:0 0;">AA</div>
<div class="b" style="left:1074.77px;top:170.00px;width:1.00px;height:17.30px;background:#3c3c3c"></div>
<div class="t" style="left:1084.02px;top:174.00px;font-size:12.6px;color:#ededed;font-weight:normal;transform:scaleX(1.0000);transform-origin:0 0;">AB</div>
<div class="b" style="left:1108.41px;top:170.00px;width:1.00px;height:17.30px;background:#3c3c3c"></div>
<div class="t" style="left:1117.22px;top:174.00px;font-size:12.6px;color:#ededed;font-weight:normal;transform:scaleX(1.0000);transform-origin:0 0;">AC</div>
<div class="b" style="left:1142.05px;top:170.00px;width:1.00px;height:17.30px;background:#3c3c3c"></div>
<div class="t" style="left:1150.93px;top:174.00px;font-size:12.6px;color:#ededed;font-weight:normal;transform:scaleX(1.0000);transform-origin:0 0;">AD</div>
<div class="b" style="left:1175.69px;top:170.00px;width:1.00px;height:17.30px;background:#3c3c3c"></div>
<div class="t" style="left:1184.89px;top:174.00px;font-size:12.6px;color:#ededed;font-weight:normal;transform:scaleX(1.0000);transform-origin:0 0;">AE</div>
<div class="b" style="left:1209.33px;top:170.00px;width:1.00px;height:17.30px;background:#3c3c3c"></div>
<div class="t" style="left:1218.87px;top:174.00px;font-size:12.6px;color:#ededed;font-weight:normal;transform:scaleX(1.0000);transform-origin:0 0;">AF</div>
<div class="b" style="left:1242.98px;top:170.00px;width:1.00px;height:17.30px;background:#3c3c3c"></div>
<div class="t" style="left:1251.67px;top:174.00px;font-size:12.6px;color:#ededed;font-weight:normal;transform:scaleX(1.0000);transform-origin:0 0;">AG</div>
<div class="b" style="left:1276.62px;top:170.00px;width:1.00px;height:17.30px;background:#3c3c3c"></div>
<div class="t" style="left:1285.72px;top:174.00px;font-size:12.6px;color:#ededed;font-weight:normal;transform:scaleX(1.0000);transform-origin:0 0;">AH</div>
<div class="b" style="left:1310.26px;top:170.00px;width:1.00px;height:17.30px;background:#3c3c3c"></div>
<div class="t" style="left:1322.23px;top:174.00px;font-size:12.6px;color:#ededed;font-weight:normal;transform:scaleX(1.0000);transform-origin:0 0;">AI</div>
<div class="b" style="left:1343.90px;top:170.00px;width:1.00px;height:17.30px;background:#3c3c3c"></div>
<div class="t" style="left:1366.13px;top:174.00px;font-size:12.6px;color:#ededed;font-weight:normal;transform:scaleX(1.0000);transform-origin:0 0;">AJ</div>
<div class="b" style="left:1401.10px;top:170.00px;width:1.00px;height:17.30px;background:#3c3c3c"></div>
<div class="t" style="left:1422.08px;top:174.00px;font-size:12.6px;color:#ededed;font-weight:normal;transform:scaleX(1.0000);transform-origin:0 0;">AK</div>
<div class="b" style="left:1458.70px;top:170.00px;width:1.00px;height:17.30px;background:#3c3c3c"></div>
<div class="t" style="left:1480.60px;top:174.00px;font-size:12.6px;color:#ededed;font-weight:normal;transform:scaleX(1.0000);transform-origin:0 0;">AL</div>
<div class="b" style="left:0.00px;top:192.90px;width:27.00px;height:1.00px;background:#3c3c3c"></div>
<div class="b" style="left:0.00px;top:210.50px;width:27.00px;height:1.00px;background:#3c3c3c"></div>
<div class="t" style="left:6.31px;top:196.00px;font-size:13.2px;color:#ededed;font-weight:normal;transform:scaleX(1.0000);transform-origin:0 0;">28</div>
<div class="b" style="left:0.00px;top:228.10px;width:27.00px;height:1.00px;background:#3c3c3c"></div>
<div class="t" style="left:6.34px;top:214.00px;font-size:13.2px;color:#ededed;font-weight:normal;transform:scaleX(1.0000);transform-origin:0 0;">29</div>
<div class="b" style="left:0.00px;top:245.70px;width:27.00px;height:1.00px;background:#3c3c3c"></div>
<div class="t" style="left:6.34px;top:231.00px;font-size:13.2px;color:#ededed;font-weight:normal;transform:scaleX(1.0000);transform-origin:0 0;">30</div>
<div class="b" style="left:0.00px;top:266.30px;width:27.00px;height:1.00px;background:#3c3c3c"></div>
<div class="t" style="left:6.41px;top:251.00px;font-size:13.2px;color:#ededed;font-weight:normal;transform:scaleX(1.0000);transform-origin:0 0;">31</div>
<div class="b" style="left:0.00px;top:283.90px;width:27.00px;height:1.00px;background:#3c3c3c"></div>
<div class="t" style="left:6.44px;top:270.00px;font-size:13.2px;color:#ededed;font-weight:normal;transform:scaleX(1.0000);transform-origin:0 0;">32</div>
<div class="b" style="left:0.00px;top:301.50px;width:27.00px;height:1.00px;background:#3c3c3c"></div>
<div class="t" style="left:6.37px;top:287.00px;font-size:13.2px;color:#ededed;font-weight:normal;transform:scaleX(1.0000);transform-origin:0 0;">33</div>
<div class="b" style="left:0.00px;top:319.10px;width:27.00px;height:1.00px;background:#3c3c3c"></div>
<div class="t" style="left:6.31px;top:305.00px;font-size:13.2px;color:#ededed;font-weight:normal;transform:scaleX(1.0000);transform-origin:0 0;">34</div>
<div class="b" style="left:0.00px;top:336.70px;width:27.00px;height:1.00px;background:#3c3c3c"></div>
<div class="t" style="left:6.37px;top:323.00px;font-size:13.2px;color:#ededed;font-weight:normal;transform:scaleX(1.0000);transform-origin:0 0;">35</div>
<div class="b" style="left:0.00px;top:354.30px;width:27.00px;height:1.00px;background:#3c3c3c"></div>
<div class="t" style="left:6.37px;top:340.00px;font-size:13.2px;color:#ededed;font-weight:normal;transform:scaleX(1.0000);transform-origin:0 0;">36</div>
<div class="b" style="left:0.00px;top:371.90px;width:27.00px;height:1.00px;background:#3c3c3c"></div>
<div class="t" style="left:6.44px;top:358.00px;font-size:13.2px;color:#ededed;font-weight:normal;transform:scaleX(1.0000);transform-origin:0 0;">37</div>
<div class="b" style="left:0.00px;top:376.70px;width:27.00px;height:1.00px;background:#3c3c3c"></div>
<div class="b" style="left:0.00px;top:394.30px;width:27.00px;height:1.00px;background:#3c3c3c"></div>
<div class="t" style="left:6.41px;top:380.00px;font-size:13.2px;color:#ededed;font-weight:normal;transform:scaleX(1.0000);transform-origin:0 0;">39</div>
<div class="b" style="left:0.00px;top:411.90px;width:27.00px;height:1.00px;background:#3c3c3c"></div>
<div class="t" style="left:6.47px;top:398.00px;font-size:13.2px;color:#ededed;font-weight:normal;transform:scaleX(1.0000);transform-origin:0 0;">40</div>
<div class="b" style="left:0.00px;top:429.50px;width:27.00px;height:1.00px;background:#3c3c3c"></div>
<div class="t" style="left:6.54px;top:415.00px;font-size:13.2px;color:#ededed;font-weight:normal;transform:scaleX(1.0000);transform-origin:0 0;">41</div>
<div class="b" style="left:0.00px;top:447.10px;width:27.00px;height:1.00px;background:#3c3c3c"></div>
<div class="t" style="left:6.57px;top:433.00px;font-size:13.2px;color:#ededed;font-weight:normal;transform:scaleX(1.0000);transform-origin:0 0;">42</div>
<div class="b" style="left:0.00px;top:464.70px;width:27.00px;height:1.00px;background:#3c3c3c"></div>
<div class="t" style="left:6.51px;top:451.00px;font-size:13.2px;color:#ededed;font-weight:normal;transform:scaleX(1.0000);transform-origin:0 0;">43</div>
<div class="b" style="left:0.00px;top:482.30px;width:27.00px;height:1.00px;background:#3c3c3c"></div>
<div class="t" style="left:6.44px;top:468.00px;font-size:13.2px;color:#ededed;font-weight:normal;transform:scaleX(1.0000);transform-origin:0 0;">44</div>
<div class="b" style="left:0.00px;top:499.90px;width:27.00px;height:1.00px;background:#3c3c3c"></div>
<div class="t" style="left:6.51px;top:486.00px;font-size:13.2px;color:#ededed;font-weight:normal;transform:scaleX(1.0000);transform-origin:0 0;">45</div>
<div class="b" style="left:0.00px;top:517.50px;width:27.00px;height:1.00px;background:#3c3c3c"></div>
<div class="t" style="left:6.51px;top:503.00px;font-size:13.2px;color:#ededed;font-weight:normal;transform:scaleX(1.0000);transform-origin:0 0;">46</div>
<div class="b" style="left:0.00px;top:535.10px;width:27.00px;height:1.00px;background:#3c3c3c"></div>
<div class="t" style="left:6.57px;top:521.00px;font-size:13.2px;color:#ededed;font-weight:normal;transform:scaleX(1.0000);transform-origin:0 0;">47</div>
<div class="b" style="left:0.00px;top:552.70px;width:27.00px;height:1.00px;background:#3c3c3c"></div>
<div class="t" style="left:6.51px;top:539.00px;font-size:13.2px;color:#ededed;font-weight:normal;transform:scaleX(1.0000);transform-origin:0 0;">48</div>
<div class="b" style="left:0.00px;top:570.30px;width:27.00px;height:1.00px;background:#3c3c3c"></div>
<div class="t" style="left:6.54px;top:556.00px;font-size:13.2px;color:#ededed;font-weight:normal;transform:scaleX(1.0000);transform-origin:0 0;">49</div>
<div class="b" style="left:0.00px;top:587.90px;width:27.00px;height:1.00px;background:#3c3c3c"></div>
<div class="t" style="left:6.34px;top:574.00px;font-size:13.2px;color:#ededed;font-weight:normal;transform:scaleX(1.0000);transform-origin:0 0;">50</div>
<div class="b" style="left:0.00px;top:605.50px;width:27.00px;height:1.00px;background:#3c3c3c"></div>
<div class="t" style="left:6.41px;top:591.00px;font-size:13.2px;color:#ededed;font-weight:normal;transform:scaleX(1.0000);transform-origin:0 0;">51</div>
<div class="b" style="left:0.00px;top:623.10px;width:27.00px;height:1.00px;background:#3c3c3c"></div>
<div class="t" style="left:6.44px;top:609.00px;font-size:13.2px;color:#ededed;font-weight:normal;transform:scaleX(1.0000);transform-origin:0 0;">52</div>
<div class="b" style="left:0.00px;top:640.70px;width:27.00px;height:1.00px;background:#3c3c3c"></div>
<div class="t" style="left:6.37px;top:627.00px;font-size:13.2px;color:#ededed;font-weight:normal;transform:scaleX(1.0000);transform-origin:0 0;">53</div>
<div class="b" style="left:0.00px;top:658.30px;width:27.00px;height:1.00px;background:#3c3c3c"></div>
<div class="t" style="left:6.31px;top:644.00px;font-size:13.2px;color:#ededed;font-weight:normal;transform:scaleX(1.0000);transform-origin:0 0;">54</div>
<div class="b" style="left:0.00px;top:675.90px;width:27.00px;height:1.00px;background:#3c3c3c"></div>
<div class="t" style="left:6.37px;top:662.00px;font-size:13.2px;color:#ededed;font-weight:normal;transform:scaleX(1.0000);transform-origin:0 0;">55</div>
<div class="b" style="left:0.00px;top:693.50px;width:27.00px;height:1.00px;background:#3c3c3c"></div>
<div class="t" style="left:6.37px;top:679.00px;font-size:13.2px;color:#ededed;font-weight:normal;transform:scaleX(1.0000);transform-origin:0 0;">56</div>
<div class="b" style="left:0.00px;top:711.10px;width:27.00px;height:1.00px;background:#3c3c3c"></div>
<div class="t" style="left:6.44px;top:697.00px;font-size:13.2px;color:#ededed;font-weight:normal;transform:scaleX(1.0000);transform-origin:0 0;">57</div>
<div class="b" style="left:0;top:187.3px;width:27px;height:6px;overflow:hidden"><div class="t" style="left:6.37px;top:-8.00px;font-size:13.2px;color:#ededed;font-weight:normal;transform:scaleX(1.0000);transform-origin:0 0;">27</div></div>
<div class="b" style="left:0;top:372.90px;width:27px;height:3.80px;overflow:hidden"><div class="t" style="left:6.37px;top:-2.00px;font-size:13.2px;color:#ededed;font-weight:normal;transform:scaleX(1.0000);transform-origin:0 0;">38</div></div>
<div class="b" style="left:101.50px;top:187.30px;width:1357.70px;height:23.70px;background:#ffffff"></div>
<div class="b" style="left:101.00px;top:187.30px;width:1.00px;height:24.20px;background:#d8e9e8"></div>
<div class="b" style="left:301.00px;top:187.30px;width:1.00px;height:24.20px;background:#d8e9e8"></div>
<div class="b" style="left:334.64px;top:187.30px;width:1.00px;height:24.20px;background:#d8e9e8"></div>
<div class="b" style="left:368.28px;top:187.30px;width:1.00px;height:24.20px;background:#d8e9e8"></div>
<div class="b" style="left:401.93px;top:187.30px;width:1.00px;height:24.20px;background:#d8e9e8"></div>
<div class="b" style="left:435.57px;top:187.30px;width:1.00px;height:24.20px;background:#d8e9e8"></div>
<div class="b" style="left:469.21px;top:187.30px;width:1.00px;height:24.20px;background:#d8e9e8"></div>
<div class="b" style="left:502.85px;top:187.30px;width:1.00px;height:24.20px;background:#d8e9e8"></div>
<div class="b" style="left:536.49px;top:187.30px;width:1.00px;height:24.20px;background:#d8e9e8"></div>
<div class="b" style="left:570.14px;top:187.30px;width:1.00px;height:24.20px;background:#d8e9e8"></div>
<div class="b" style="left:603.78px;top:187.30px;width:1.00px;height:24.20px;background:#d8e9e8"></div>
<div class="b" style="left:637.42px;top:187.30px;width:1.00px;height:24.20px;background:#d8e9e8"></div>
<div class="b" style="left:671.06px;top:187.30px;width:1.00px;height:24.20px;background:#d8e9e8"></div>
<div class="b" style="left:704.70px;top:187.30px;width:1.00px;height:24.20px;background:#d8e9e8"></div>
<div class="b" style="left:738.35px;top:187.30px;width:1.00px;height:24.20px;background:#d8e9e8"></div>
<div class="b" style="left:771.99px;top:187.30px;width:1.00px;height:24.20px;background:#d8e9e8"></div>
<div class="b" style="left:805.63px;top:187.30px;width:1.00px;height:24.20px;background:#d8e9e8"></div>
<div class="b" style="left:839.27px;top:187.30px;width:1.00px;height:24.20px;background:#d8e9e8"></div>
<div class="b" style="left:872.91px;top:187.30px;width:1.00px;height:24.20px;background:#d8e9e8"></div>
<div class="b" style="left:906.56px;top:187.30px;width:1.00px;height:24.20px;background:#d8e9e8"></div>
<div class="b" style="left:940.20px;top:187.30px;width:1.00px;height:24.20px;background:#d8e9e8"></div>
<div class="b" style="left:973.84px;top:187.30px;width:1.00px;height:24.20px;background:#d8e9e8"></div>
<div class="b" style="left:1007.48px;top:187.30px;width:1.00px;height:24.20px;background:#d8e9e8"></div>
<div class="b" style="left:1041.12px;top:187.30px;width:1.00px;height:24.20px;background:#d8e9e8"></div>
<div class="b" style="left:1074.77px;top:187.30px;width:1.00px;height:24.20px;background:#d8e9e8"></div>
<div class="b" style="left:1108.41px;top:187.30px;width:1.00px;height:24.20px;background:#d8e9e8"></div>
<div class="b" style="left:1142.05px;top:187.30px;width:1.00px;height:24.20px;background:#d8e9e8"></div>
<div class="b" style="left:1175.69px;top:187.30px;width:1.00px;height:24.20px;background:#d8e9e8"></div>
<div class="b" style="left:1209.33px;top:187.30px;width:1.00px;height:24.20px;background:#d8e9e8"></div>
<div class="b" style="left:1242.98px;top:187.30px;width:1.00px;height:24.20px;background:#d8e9e8"></div>
<div class="b" style="left:1276.62px;top:187.30px;width:1.00px;height:24.20px;background:#d8e9e8"></div>
<div class="b" style="left:1310.26px;top:187.30px;width:1.00px;height:24.20px;background:#d8e9e8"></div>
<div class="b" style="left:1343.90px;top:187.30px;width:1.00px;height:24.20px;background:#d8e9e8"></div>
<div class="b" style="left:1401.10px;top:187.30px;width:1.00px;height:24.20px;background:#d8e9e8"></div>
<div class="b" style="left:1458.70px;top:187.30px;width:1.00px;height:24.20px;background:#d8e9e8"></div>
<div class="b" style="left:101.50px;top:192.90px;width:1357.70px;height:1.00px;background:#d8e9e8"></div>
<div class="b" style="left:101.50px;top:210.50px;width:1358.20px;height:1.00px;background:#d8e9e8"></div>
<svg class="b" style="left:419px;top:236px;" width="880" height="5" viewBox="0 0 880 5"><path d="M1.7 2.85H879" stroke="#00a84f" stroke-width="2.6" stroke-linecap="round" stroke-dasharray="7.6 11.33"/></svg>
<div class="b" style="left:311.00px;top:267.00px;width:1095.40px;height:1.00px;background:#dcdcdc"></div>
<div class="b" style="left:419.50px;top:266.20px;width:878.50px;height:2.00px;background:#b0d2d1"></div>
<div class="t" style="left:80.46px;top:250.00px;font-size:15.8px;color:#141426;font-weight:normal;transform:scaleX(0.9802);transform-origin:0 0;">Hábitos Semanais</div>
<div class="b" style="left:101.50px;top:284.40px;width:200.00px;height:17.60px;background:#d6e7e6"></div>
<div class="b" style="left:101.50px;top:302.00px;width:200.00px;height:17.60px;background:#d6e7e6"></div>
<div class="b" style="left:101.50px;top:319.60px;width:200.00px;height:17.60px;background:#acd0cf"></div>
<div class="b" style="left:101.50px;top:337.20px;width:200.00px;height:17.60px;background:#acd0cf"></div>
<div class="b" style="left:101.50px;top:283.90px;width:1242.90px;height:1.00px;background:#fbfbfb"></div>
<div class="b" style="left:101.50px;top:301.50px;width:1242.90px;height:1.00px;background:#fbfbfb"></div>
<div class="b" style="left:101.50px;top:319.10px;width:1242.90px;height:1.00px;background:#fbfbfb"></div>
<div class="b" style="left:101.50px;top:336.70px;width:1242.90px;height:1.00px;background:#fbfbfb"></div>
<div class="b" style="left:101.50px;top:354.30px;width:1242.90px;height:1.00px;background:#fbfbfb"></div>
<div class="b" style="left:301.00px;top:283.90px;width:1.00px;height:71.40px;background:#fbfbfb"></div>
<div class="b" style="left:536.49px;top:283.90px;width:1.00px;height:71.40px;background:#fbfbfb"></div>
<div class="b" style="left:771.99px;top:283.90px;width:1.00px;height:71.40px;background:#fbfbfb"></div>
<div class="b" style="left:1007.48px;top:283.90px;width:1.00px;height:71.40px;background:#fbfbfb"></div>
<div class="b" style="left:1242.98px;top:283.90px;width:1.00px;height:71.40px;background:#fbfbfb"></div>
<div class="b" style="left:1343.90px;top:283.90px;width:1.00px;height:71.40px;background:#fbfbfb"></div>
<div class="t" style="left:104.09px;top:289.00px;font-size:12.9px;color:#141426;font-weight:bold;transform:scaleX(0.9923);transform-origin:0 0;">Cumpridos</div>
<div class="t" style="left:103.75px;top:306.00px;font-size:12.9px;color:#141426;font-weight:bold;transform:scaleX(1.0123);transform-origin:0 0;">Não cumpridos</div>
<div class="t" style="left:104.46px;top:324.00px;font-size:12.9px;color:#141426;font-weight:bold;transform:scaleX(1.0787);transform-origin:0 0;">Total</div>
<div class="t" style="left:104.28px;top:342.00px;font-size:12.9px;color:#141426;font-weight:bold;transform:scaleX(0.9842);transform-origin:0 0;">% Cumpridos</div>
<div class="t" style="left:415.99px;top:289.00px;font-size:12.5px;color:#3d3d3d;font-weight:normal;transform:scaleX(0.9300);transform-origin:0 0;">0</div>
<div class="t" style="left:416.02px;top:306.00px;font-size:12.5px;color:#3d3d3d;font-weight:normal;transform:scaleX(0.9300);transform-origin:0 0;">5</div>
<div class="t" style="left:416.02px;top:324.00px;font-size:12.5px;color:#3d3d3d;font-weight:normal;transform:scaleX(0.9300);transform-origin:0 0;">5</div>
<div class="t" style="left:410.82px;top:342.00px;font-size:12.5px;color:#3d3d3d;font-weight:normal;transform:scaleX(0.9300);transform-origin:0 0;">0%</div>
<div class="t" style="left:651.49px;top:289.00px;font-size:12.5px;color:#3d3d3d;font-weight:normal;transform:scaleX(0.9300);transform-origin:0 0;">0</div>
<div class="t" style="left:651.52px;top:306.00px;font-size:12.5px;color:#3d3d3d;font-weight:normal;transform:scaleX(0.9300);transform-origin:0 0;">5</div>
<div class="t" style="left:651.52px;top:324.00px;font-size:12.5px;color:#3d3d3d;font-weight:normal;transform:scaleX(0.9300);transform-origin:0 0;">5</div>
<div class="t" style="left:646.31px;top:342.00px;font-size:12.5px;color:#3d3d3d;font-weight:normal;transform:scaleX(0.9300);transform-origin:0 0;">0%</div>
<div class="t" style="left:886.98px;top:289.00px;font-size:12.5px;color:#3d3d3d;font-weight:normal;transform:scaleX(0.9300);transform-origin:0 0;">0</div>
<div class="t" style="left:887.01px;top:306.00px;font-size:12.5px;color:#3d3d3d;font-weight:normal;transform:scaleX(0.9300);transform-origin:0 0;">5</div>
<div class="t" style="left:887.01px;top:324.00px;font-size:12.5px;color:#3d3d3d;font-weight:normal;transform:scaleX(0.9300);transform-origin:0 0;">5</div>
<div class="t" style="left:881.81px;top:342.00px;font-size:12.5px;color:#3d3d3d;font-weight:normal;transform:scaleX(0.9300);transform-origin:0 0;">0%</div>
<div class="t" style="left:1122.47px;top:289.00px;font-size:12.5px;color:#3d3d3d;font-weight:normal;transform:scaleX(0.9300);transform-origin:0 0;">0</div>
<div class="t" style="left:1122.50px;top:306.00px;font-size:12.5px;color:#3d3d3d;font-weight:normal;transform:scaleX(0.9300);transform-origin:0 0;">5</div>
<div class="t" style="left:1122.50px;top:324.00px;font-size:12.5px;color:#3d3d3d;font-weight:normal;transform:scaleX(0.9300);transform-origin:0 0;">5</div>
<div class="t" style="left:1117.30px;top:342.00px;font-size:12.5px;color:#3d3d3d;font-weight:normal;transform:scaleX(0.9300);transform-origin:0 0;">0%</div>
<div class="t" style="left:1290.68px;top:289.00px;font-size:12.5px;color:#3d3d3d;font-weight:normal;transform:scaleX(0.9300);transform-origin:0 0;">0</div>
<div class="t" style="left:1290.71px;top:306.00px;font-size:12.5px;color:#3d3d3d;font-weight:normal;transform:scaleX(0.9300);transform-origin:0 0;">5</div>
<div class="t" style="left:1290.71px;top:324.00px;font-size:12.5px;color:#3d3d3d;font-weight:normal;transform:scaleX(0.9300);transform-origin:0 0;">5</div>
<div class="t" style="left:1285.51px;top:342.00px;font-size:12.5px;color:#3d3d3d;font-weight:normal;transform:scaleX(0.9300);transform-origin:0 0;">0%</div>
<div class="b" style="left:101.50px;top:377.20px;width:1357.70px;height:17.60px;background:#acd0cf"></div>
<div class="b" style="left:101.50px;top:394.80px;width:1357.70px;height:176.00px;background:#ffffff"></div>
<div class="b" style="left:301.00px;top:377.20px;width:1.00px;height:17.60px;background:#e9f2f2"></div>
<div class="b" style="left:301.00px;top:394.80px;width:1.00px;height:176.00px;background:#d8e9e8"></div>
<div class="b" style="left:536.49px;top:377.20px;width:1.00px;height:17.60px;background:#e9f2f2"></div>
<div class="b" style="left:536.49px;top:394.80px;width:1.00px;height:176.00px;background:#d8e9e8"></div>
<div class="b" style="left:771.99px;top:377.20px;width:1.00px;height:17.60px;background:#e9f2f2"></div>
<div class="b" style="left:771.99px;top:394.80px;width:1.00px;height:176.00px;background:#d8e9e8"></div>
<div class="b" style="left:1007.48px;top:377.20px;width:1.00px;height:17.60px;background:#e9f2f2"></div>
<div class="b" style="left:1007.48px;top:394.80px;width:1.00px;height:176.00px;background:#d8e9e8"></div>
<div class="b" style="left:1242.98px;top:377.20px;width:1.00px;height:17.60px;background:#e9f2f2"></div>
<div class="b" style="left:1242.98px;top:394.80px;width:1.00px;height:176.00px;background:#d8e9e8"></div>
<div class="b" style="left:1343.90px;top:377.20px;width:1.00px;height:17.60px;background:#e9f2f2"></div>
<div class="b" style="left:1343.90px;top:394.80px;width:1.00px;height:176.00px;background:#d8e9e8"></div>
<div class="b" style="left:1401.10px;top:377.20px;width:1.00px;height:17.60px;background:#e9f2f2"></div>
<div class="b" style="left:1401.10px;top:394.80px;width:1.00px;height:176.00px;background:#d8e9e8"></div>
<div class="b" style="left:101.00px;top:394.80px;width:1.00px;height:176.00px;background:#d8e9e8"></div>
<div class="b" style="left:1458.70px;top:394.80px;width:1.00px;height:176.00px;background:#d8e9e8"></div>
<div class="b" style="left:101.00px;top:411.90px;width:1358.70px;height:1.00px;background:#d8e9e8"></div>
<div class="b" style="left:101.00px;top:429.50px;width:1358.70px;height:1.00px;background:#d8e9e8"></div>
<div class="b" style="left:101.00px;top:447.10px;width:1358.70px;height:1.00px;background:#d8e9e8"></div>
<div class="b" style="left:101.00px;top:464.70px;width:1358.70px;height:1.00px;background:#d8e9e8"></div>
<div class="b" style="left:101.00px;top:482.30px;width:1358.70px;height:1.00px;background:#d8e9e8"></div>
<div class="b" style="left:101.00px;top:499.90px;width:1358.70px;height:1.00px;background:#d8e9e8"></div>
<div class="b" style="left:101.00px;top:517.50px;width:1358.70px;height:1.00px;background:#d8e9e8"></div>
<div class="b" style="left:101.00px;top:535.10px;width:1358.70px;height:1.00px;background:#d8e9e8"></div>
<div class="b" style="left:101.00px;top:552.70px;width:1358.70px;height:1.00px;background:#d8e9e8"></div>
<div class="b" style="left:101.00px;top:570.30px;width:1358.70px;height:1.00px;background:#d8e9e8"></div>
<div class="t" style="left:172.99px;top:381.00px;font-size:12.7px;color:#141426;font-weight:bold;transform:scaleX(1.0000);transform-origin:0 0;">Atividade</div>
<div class="t" style="left:389.56px;top:381.00px;font-size:12.7px;color:#141426;font-weight:bold;transform:scaleX(1.0000);transform-origin:0 0;">Semana 1</div>
<div class="t" style="left:625.15px;top:381.00px;font-size:12.7px;color:#141426;font-weight:bold;transform:scaleX(1.0000);transform-origin:0 0;">Semana 2</div>
<div class="t" style="left:860.61px;top:381.00px;font-size:12.7px;color:#141426;font-weight:bold;transform:scaleX(1.0000);transform-origin:0 0;">Semana 3</div>
<div class="t" style="left:1095.92px;top:381.00px;font-size:12.7px;color:#141426;font-weight:bold;transform:scaleX(1.0000);transform-origin:0 0;">Semana 4</div>
<div class="t" style="left:1264.25px;top:381.00px;font-size:12.7px;color:#141426;font-weight:bold;transform:scaleX(1.0000);transform-origin:0 0;">Semana 5</div>
<div class="t" style="left:1358.68px;top:381.00px;font-size:12.7px;color:#141426;font-weight:bold;transform:scaleX(1.0000);transform-origin:0 0;">Total</div>
<div class="t" style="left:1410.75px;top:381.00px;font-size:12.7px;color:#141426;font-weight:bold;transform:scaleX(1.0000);transform-origin:0 0;">% Mês</div>
<div class="t" style="left:162.26px;top:399.00px;font-size:12.3px;color:#3d3d3d;font-weight:normal;transform:scaleX(1.0000);transform-origin:0 0;">Estudar inglês</div>
<div class="t" style="left:1370.30px;top:399.00px;font-size:12.3px;color:#3d3d3d;font-weight:normal;transform:scaleX(0.9300);transform-origin:0 0;">0</div>
<div class="t" style="left:1417.93px;top:399.00px;font-size:12.3px;color:#3d3d3d;font-weight:normal;transform:scaleX(0.9300);transform-origin:0 0;">0,0%</div>
<div class="t" style="left:151.10px;top:417.00px;font-size:12.3px;color:#3d3d3d;font-weight:normal;transform:scaleX(1.0000);transform-origin:0 0;">Praticar um hobby</div>
<div class="t" style="left:1370.30px;top:417.00px;font-size:12.3px;color:#3d3d3d;font-weight:normal;transform:scaleX(0.9300);transform-origin:0 0;">0</div>
<div class="t" style="left:1417.93px;top:417.00px;font-size:12.3px;color:#3d3d3d;font-weight:normal;transform:scaleX(0.9300);transform-origin:0 0;">0,0%</div>
<div class="t" style="left:162.23px;top:435.00px;font-size:12.3px;color:#3d3d3d;font-weight:normal;transform:scaleX(1.0000);transform-origin:0 0;">Academia (2x)</div>
<div class="t" style="left:1370.30px;top:435.00px;font-size:12.3px;color:#3d3d3d;font-weight:normal;transform:scaleX(0.9300);transform-origin:0 0;">0</div>
<div class="t" style="left:1417.93px;top:435.00px;font-size:12.3px;color:#3d3d3d;font-weight:normal;transform:scaleX(0.9300);transform-origin:0 0;">0,0%</div>
<div class="t" style="left:139.72px;top:452.00px;font-size:12.3px;color:#3d3d3d;font-weight:normal;transform:scaleX(1.0000);transform-origin:0 0;">Cozinhar em casa (3x)</div>
<div class="t" style="left:1370.30px;top:452.00px;font-size:12.3px;color:#3d3d3d;font-weight:normal;transform:scaleX(0.9300);transform-origin:0 0;">0</div>
<div class="t" style="left:1417.93px;top:452.00px;font-size:12.3px;color:#3d3d3d;font-weight:normal;transform:scaleX(0.9300);transform-origin:0 0;">0,0%</div>
<div class="t" style="left:112.85px;top:470.00px;font-size:12.3px;color:#3d3d3d;font-weight:normal;transform:scaleX(1.0000);transform-origin:0 0;">Tempo de qualidade com família</div>
<div class="t" style="left:1370.30px;top:470.00px;font-size:12.3px;color:#3d3d3d;font-weight:normal;transform:scaleX(0.9300);transform-origin:0 0;">0</div>
<div class="t" style="left:1417.93px;top:470.00px;font-size:12.3px;color:#3d3d3d;font-weight:normal;transform:scaleX(0.9300);transform-origin:0 0;">0,0%</div>
<div class="b" style="left:1519.50px;top:169.80px;width:16.50px;height:548.50px;background:#171717;border-radius:8px"></div>
<svg class="b" style="left:1523px;top:174px;" width="10" height="8" viewBox="0 0 10 8"><path d="M0.3 7.2L4.6 0.6 8.9 7.2z" fill="#a0a0a0" stroke="#a0a0a0" stroke-width="0.6" stroke-linejoin="round"/></svg>
<div class="b" style="left:1523.10px;top:431.40px;width:9.10px;height:263.20px;background:#a0a0a0;border-radius:4.5px"></div>
<svg class="b" style="left:1523px;top:706px;" width="10" height="8" viewBox="0 0 10 8"><path d="M0.3 0.8L4.6 7.4 8.9 0.8z" fill="#a0a0a0" stroke="#a0a0a0" stroke-width="0.6" stroke-linejoin="round"/></svg>
<div class="b" style="left:941.90px;top:723.80px;width:576.40px;height:16.40px;background:#171717;border-radius:8px"></div>
<svg class="b" style="left:946px;top:727px;" width="8" height="10" viewBox="0 0 8 10"><path d="M7.4 0.6L0.8 4.9 7.4 9.2z" fill="#a0a0a0" stroke="#a0a0a0" stroke-width="0.6" stroke-linejoin="round"/></svg>
<div class="b" style="left:958.30px;top:727.30px;width:523.00px;height:9.40px;background:#a0a0a0;border-radius:4.7px"></div>
<svg class="b" style="left:1507px;top:727px;" width="8" height="10" viewBox="0 0 8 10"><path d="M0.6 0.6L7.2 4.9 0.6 9.2z" fill="#a0a0a0" stroke="#a0a0a0" stroke-width="0.6" stroke-linejoin="round"/></svg>
<svg class="b" style="left:24px;top:727px;" width="10" height="12" viewBox="0 0 10 12"><path d="M7.5 1L2.5 6l5 5" fill="none" stroke="#bdbdbd" stroke-width="1.2"/></svg>
<svg class="b" style="left:56px;top:727px;" width="10" height="12" viewBox="0 0 10 12"><path d="M2.5 1l5 5-5 5" fill="none" stroke="#bdbdbd" stroke-width="1.2"/></svg>
<div class="b" style="left:856.30px;top:730.20px;width:2.40px;height:2.40px;background:#e0e0e0;border-radius:1.2px"></div>
<div class="b" style="left:860.20px;top:730.20px;width:2.40px;height:2.40px;background:#e0e0e0;border-radius:1.2px"></div>
<div class="b" style="left:864.10px;top:730.20px;width:2.40px;height:2.40px;background:#e0e0e0;border-radius:1.2px"></div>
<div class="b" style="left:887.40px;top:730.90px;width:11.70px;height:1.30px;background:#e6e6e6"></div>
<div class="b" style="left:892.60px;top:725.80px;width:1.30px;height:11.30px;background:#e6e6e6"></div>
<div class="b" style="left:924.30px;top:727.50px;width:2.30px;height:2.30px;background:#e0e0e0;border-radius:1px"></div>
<div class="b" style="left:924.30px;top:731.40px;width:2.30px;height:2.30px;background:#e0e0e0;border-radius:1px"></div>
<div class="b" style="left:924.30px;top:735.30px;width:2.30px;height:2.30px;background:#e0e0e0;border-radius:1px"></div>
<div class="b" style="left:113.00px;top:720.20px;width:66.30px;height:24.20px;background:#d6e7e6;border-radius:5px"></div>
<div class="t" style="left:122.79px;top:725.00px;font-size:15.3px;color:#2b2b2b;font-weight:normal;transform:scaleX(0.8760);transform-origin:0 0;">INICIAL</div>
<div class="b" style="left:188.30px;top:720.20px;width:67.90px;height:24.20px;background:#efefef;border-radius:5px"></div>
<div class="t" style="left:196.85px;top:725.00px;font-size:15.3px;color:#2b2b2b;font-weight:normal;transform:scaleX(0.8760);transform-origin:0 0;">CONFIG</div>
<div class="b" style="left:259.10px;top:716.00px;width:55.20px;height:6.00px;background:#eeeeee"></div>
<div class="b" style="left:259.10px;top:716.00px;width:6.00px;height:8.00px;background:#0a0a0a;border-top-right-radius:6px"></div>
<div class="b" style="left:308.30px;top:716.00px;width:6.00px;height:8.00px;background:#0a0a0a;border-top-left-radius:6px"></div>
<div class="b" style="left:265.10px;top:716.00px;width:43.20px;height:28.40px;background:linear-gradient(#ffffff, #dce9e8);border-radius:0 0 6px 6px"></div>
<div class="t" style="left:273.56px;top:723.00px;font-size:14.6px;color:#1e1e1e;font-weight:bold;transform:scaleX(0.9300);transform-origin:0 0;">JAN</div>
<div class="b" style="left:272.90px;top:740.10px;width:27.40px;height:2.00px;background:#1a8f4a;border-radius:1px"></div>
<div class="b" style="left:317.00px;top:720.20px;width:39.80px;height:24.20px;background:#acd0cf;border-radius:5px"></div>
<div class="t" style="left:323.86px;top:725.00px;font-size:15.3px;color:#2b2b2b;font-weight:normal;transform:scaleX(0.8760);transform-origin:0 0;">FEV</div>
<div class="b" style="left:366.00px;top:720.20px;width:47.70px;height:24.20px;background:#acd0cf;border-radius:5px"></div>
<div class="t" style="left:375.24px;top:725.00px;font-size:15.3px;color:#2b2b2b;font-weight:normal;transform:scaleX(0.8760);transform-origin:0 0;">MAR</div>
<div class="b" style="left:422.90px;top:720.20px;width:43.80px;height:24.20px;background:#acd0cf;border-radius:5px"></div>
<div class="t" style="left:431.83px;top:725.00px;font-size:15.3px;color:#2b2b2b;font-weight:normal;transform:scaleX(0.8760);transform-origin:0 0;">ABR</div>
<div class="b" style="left:475.50px;top:720.20px;width:44.20px;height:24.20px;background:#acd0cf;border-radius:5px"></div>
<div class="t" style="left:486.27px;top:725.00px;font-size:15.3px;color:#2b2b2b;font-weight:normal;transform:scaleX(0.8760);transform-origin:0 0;">MAI</div>
<div class="b" style="left:528.40px;top:720.20px;width:43.40px;height:24.20px;background:#acd0cf;border-radius:5px"></div>
<div class="t" style="left:538.04px;top:725.00px;font-size:15.3px;color:#2b2b2b;font-weight:normal;transform:scaleX(0.8760);transform-origin:0 0;">JUN</div>
<div class="b" style="left:581.00px;top:720.20px;width:38.80px;height:24.20px;background:#acd0cf;border-radius:5px"></div>
<div class="t" style="left:589.11px;top:725.00px;font-size:15.3px;color:#2b2b2b;font-weight:normal;transform:scaleX(0.8760);transform-origin:0 0;">JUL</div>
<div class="b" style="left:628.50px;top:720.20px;width:46.10px;height:24.20px;background:#acd0cf;border-radius:5px"></div>
<div class="t" style="left:637.47px;top:725.00px;font-size:15.3px;color:#2b2b2b;font-weight:normal;transform:scaleX(0.8760);transform-origin:0 0;">AGO</div>
<div class="b" style="left:684.00px;top:720.20px;width:38.90px;height:24.20px;background:#acd0cf;border-radius:5px"></div>
<div class="t" style="left:690.75px;top:725.00px;font-size:15.3px;color:#2b2b2b;font-weight:normal;transform:scaleX(0.8760);transform-origin:0 0;">SET</div>
<div class="b" style="left:732.00px;top:720.20px;width:44.50px;height:24.20px;background:#acd0cf;border-radius:5px"></div>
<div class="t" style="left:740.44px;top:725.00px;font-size:15.3px;color:#2b2b2b;font-weight:normal;transform:scaleX(0.8760);transform-origin:0 0;">OUT</div>
<div class="b" style="left:786.00px;top:720.20px;width:46.40px;height:24.20px;background:#acd0cf;border-radius:5px"></div>
<div class="t" style="left:794.69px;top:725.00px;font-size:15.3px;color:#2b2b2b;font-weight:normal;transform:scaleX(0.8760);transform-origin:0 0;">NOV</div>
<div class="b" style="left:182.75px;top:722.90px;width:1.50px;height:18.90px;background:#626262"></div>
<div class="b" style="left:259.85px;top:722.90px;width:1.50px;height:18.90px;background:#626262"></div>
<div class="b" style="left:312.55px;top:722.90px;width:1.50px;height:18.90px;background:#626262"></div>
<div class="b" style="left:360.75px;top:722.90px;width:1.50px;height:18.90px;background:#626262"></div>
<div class="b" style="left:417.65px;top:722.90px;width:1.50px;height:18.90px;background:#626262"></div>
<div class="b" style="left:470.35px;top:722.90px;width:1.50px;height:18.90px;background:#626262"></div>
<div class="b" style="left:523.85px;top:722.90px;width:1.50px;height:18.90px;background:#626262"></div>
<div class="b" style="left:576.25px;top:722.90px;width:1.50px;height:18.90px;background:#626262"></div>
<div class="b" style="left:623.95px;top:722.90px;width:1.50px;height:18.90px;background:#626262"></div>
<div class="b" style="left:678.75px;top:722.90px;width:1.50px;height:18.90px;background:#626262"></div>
<div class="b" style="left:726.65px;top:722.90px;width:1.50px;height:18.90px;background:#626262"></div>
<div class="b" style="left:780.25px;top:722.90px;width:1.50px;height:18.90px;background:#626262"></div>
<div class="b" style="left:836.55px;top:722.90px;width:1.50px;height:18.90px;background:#626262"></div>
<div class="b" style="left:841.50px;top:720.20px;width:8.00px;height:24.20px;background:#acd0cf;border-radius:5px 0 0 5px"></div>
<div class="b" style="left:846.00px;top:716.00px;width:6.00px;height:30.00px;background:#0a0a0a"></div>
</body></html>
